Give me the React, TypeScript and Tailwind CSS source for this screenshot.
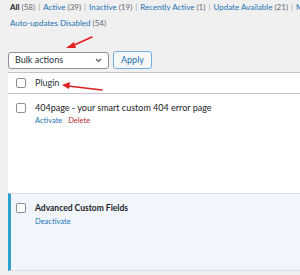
import * as React from 'react';

const font = { fontFamily: 'Lato, "Open Sans", sans-serif' };

function Check() {
  return <span className="block w-[10px] h-[10px] shrink-0 rounded-[2px] border border-[#8c8f94] bg-white" />;
}

function Sep() {
  return <span className="text-[#a7aaad] mx-[3px]">|</span>;
}

export default function App() {
  return (
    <div className="relative w-[300px] h-[275px] overflow-hidden bg-[#f0f0f1] text-[9px] text-[#646970]" style={font}>
      {/* status filters */}
      <div className="pl-[10px] h-[14px] leading-[14px] whitespace-nowrap text-[8px]">
        <span className="font-bold text-[#1d2327]">All</span> (58)<Sep />
        <span className="text-[#2271b1]">Active</span> (39)<Sep />
        <span className="text-[#2271b1]">Inactive</span> (19)<Sep />
        <span className="text-[#2271b1]">Recently Active</span> (1)<Sep />
        <span className="text-[#2271b1]">Update Available</span> (21)<Sep />
        <span className="text-[#2271b1]">Must-Use</span>
      </div>
      <div className="pl-[10px] mt-[2px] h-[14px] leading-[14px] whitespace-nowrap text-[8px]">
        <span className="text-[#2271b1]">Auto-updates Disabled</span> (54)
      </div>

      {/* bulk actions */}
      <div className="flex items-center gap-[4px] pl-[8px] mt-[21px]">
        <div className="flex items-center justify-between w-[101px] h-[17px] bg-white border border-[#8c8f94] rounded-[3px] pl-[6px] pr-[6px] text-[#2c3338] text-[9px]">
          <span>Bulk actions</span>
          <svg width="7" height="5" viewBox="0 0 7 5" fill="none" stroke="#50575e" strokeWidth="1.1">
            <path d="M1 1l2.5 2.5L6 1" />
          </svg>
        </div>
        <div className="flex items-center h-[18px] px-[7px] bg-[#f6f7f7] border border-[#72aee6] rounded-[3px] text-[#2271b1]">
          Apply
        </div>
      </div>

      {/* table */}
      <div className="ml-[8px] mt-[3px] bg-white border-t border-[#c3c4c7] w-[310px]">
        <div className="flex items-center gap-[9px] pl-[8px] h-[21px] border-b border-[#c3c4c7] text-[#2c3338]">
          <Check />
          <span>Plugin</span>
        </div>
        <div className="h-[99px] flex gap-[9px] pl-[8px] pt-[8px]">
          <div className="pt-[1px]"><Check /></div>
          <div className="leading-[12px]">
            <div className="text-[#1d2327] text-[9px]">404page - your smart custom 404 error page</div>
            <div className="text-[7.5px] mt-[1px]">
              <span className="text-[#2271b1]">Activate</span>
              <span className="text-[#dcdcde] mx-[2px]">|</span>
              <span className="text-[#b32d2e]">Delete</span>
            </div>
          </div>
        </div>
        <div className="h-[78px] flex gap-[9px] pl-[5px] pt-[8px] bg-[#f0f6fc] border-t border-[#dcdcde] border-l-[3px] border-l-[#2ea2cc] border-b border-b-[#dcdcde]">
          <div className="pt-[1px]"><Check /></div>
          <div className="leading-[12px]">
            <div className="font-bold text-[#1d2327] text-[8.5px]">Advanced Custom Fields</div>
            <div className="text-[7.5px] mt-[2px] text-[#2271b1]">Deactivate</div>
          </div>
        </div>
      </div>

      {/* annotation arrows */}
      <svg className="absolute left-0 top-0 pointer-events-none" width="300" height="275">
        <g stroke="#e02020" strokeWidth="1.6" fill="#e02020" strokeLinecap="round">
          <line x1="92" y1="37" x2="72" y2="46" />
          <polygon points="66,48 74,42 76,48" stroke="none" />
          <line x1="102" y1="90" x2="68" y2="86" />
          <polygon points="62,85 70,82 69,89" stroke="none" />
        </g>
      </svg>
    </div>
  );
}
